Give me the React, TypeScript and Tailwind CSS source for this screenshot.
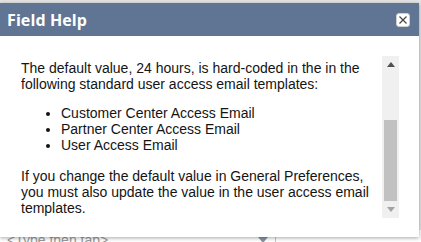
import React from "react";

export default function App() {
  return (
    <div className="relative w-[421px] h-[242px] overflow-hidden bg-[#e4e4e4]">
      {/* background page */}
      <div className="absolute left-0 top-[230px] w-[421px] h-[20px] bg-white flex items-center">
        <span className="pl-[7px] text-[14px] text-[#9a9a9a] [font-family:'Liberation_Sans',Arial,sans-serif] w-[255px]">
          &lt;Type then tab&gt;
        </span>
        <svg width="12" height="8" viewBox="0 0 12 8" className="ml-[2px]">
          <path d="M1 1 L11 1 L6 7 Z" fill="#8a94a4" />
        </svg>
        <div className="ml-[6px] w-px h-[14px] bg-[#c8c8c8]" />
      </div>

      {/* dialog */}
      <div className="absolute left-0 top-[3px] w-[419px] h-[234px] bg-white shadow-[0_1px_4px_rgba(0,0,0,0.35)] flex flex-col">
        <div className="h-[33px] bg-[#607594] flex items-center justify-between pl-[7px] pr-[9px]">
          <span className="text-white font-bold text-[16px] [font-family:'Open_Sans',sans-serif] tracking-[0.1px]">
            Field Help
          </span>
          <button className="w-[14px] h-[14px] bg-white rounded-[3px] border border-[#d0d0d0] flex items-center justify-center">
            <svg width="10" height="10" viewBox="0 0 10 10">
              <path d="M1.5 1.5 L8.5 8.5 M8.5 1.5 L1.5 8.5" stroke="#444" strokeWidth="1.2" />
            </svg>
          </button>
        </div>

        <div className="mt-[20px] h-[162px] flex">
          <div className="w-[382px] h-full overflow-hidden pl-[21px] pr-[8px] pt-[4px] text-[14px] leading-[16px] text-[#141414] [font-family:'Liberation_Sans',Arial,sans-serif]">
            <p>
              The default value, 24 hours, is hard-coded in the in the following standard user access email templates:
            </p>
            <ul className="list-disc pl-[40px] mt-[13px]">
              <li>Customer Center Access Email</li>
              <li>Partner Center Access Email</li>
              <li>User Access Email</li>
            </ul>
            <p className="mt-[15px]">
              If you change the default value in General Preferences, you must also update the value in the user access email templates.
            </p>
          </div>
          <div className="w-[17px] h-full bg-[#f0f0f0] flex flex-col items-center">
            <div className="h-[17px] w-full flex items-center justify-center">
              <svg width="8" height="5" viewBox="0 0 8 5">
                <path d="M0 5 L4 0 L8 5 Z" fill="#505050" />
              </svg>
            </div>
            <div className="flex-1 w-full flex flex-col justify-end px-[2px]">
              <div className="h-[81px] bg-[#c1c1c1]" />
            </div>
            <div className="h-[17px] w-full flex items-center justify-center">
              <svg width="8" height="5" viewBox="0 0 8 5">
                <path d="M0 0 L8 0 L4 5 Z" fill="#a3a3a3" />
              </svg>
            </div>
          </div>
        </div>
      </div>
    </div>
  );
}
